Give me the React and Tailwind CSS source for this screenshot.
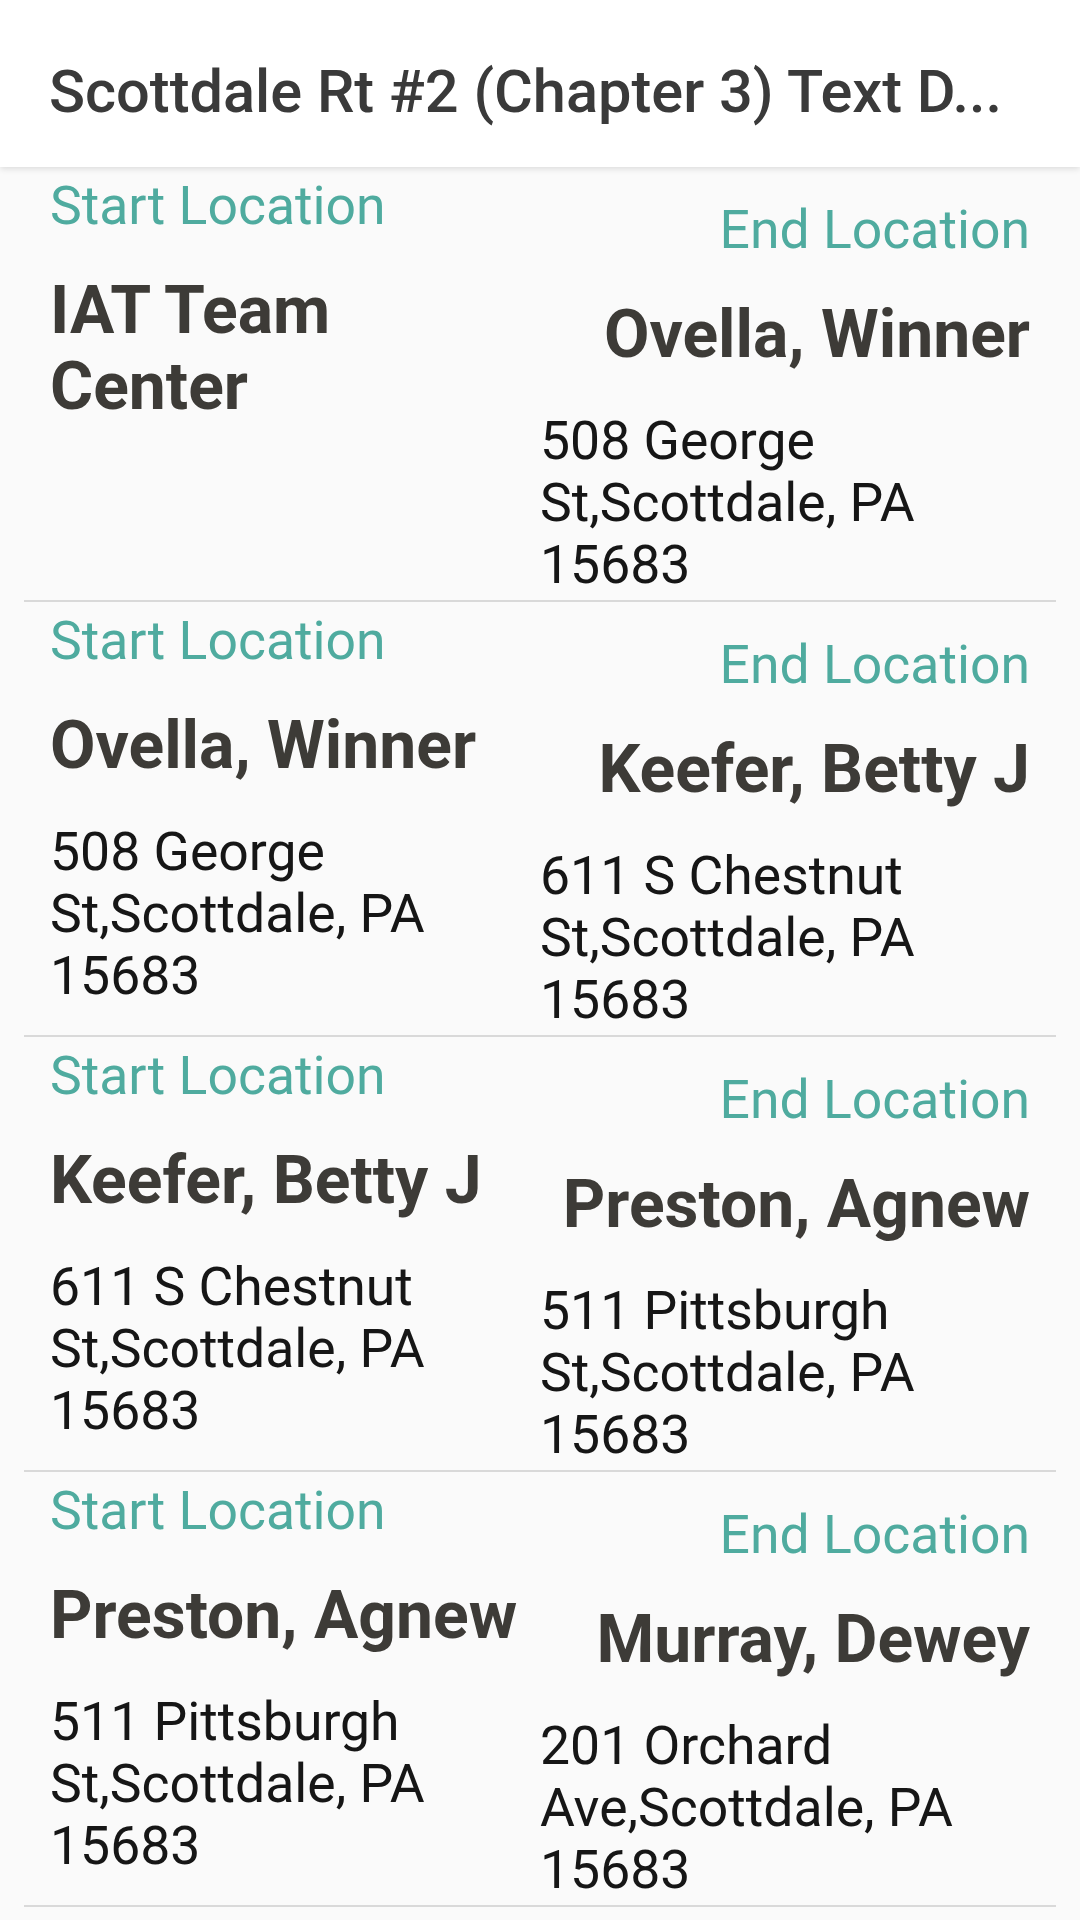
import React from "react";

const rows = [
  {
    start: "IAT Team Center",
    startAddr: null,
    end: "Ovella, Winner",
    endAddr: "508 George St,Scottdale, PA 15683",
  },
  {
    start: "Ovella, Winner",
    startAddr: "508 George St,Scottdale, PA 15683",
    end: "Keefer, Betty J",
    endAddr: "611 S Chestnut St,Scottdale, PA 15683",
  },
  {
    start: "Keefer, Betty J",
    startAddr: "611 S Chestnut St,Scottdale, PA 15683",
    end: "Preston, Agnew",
    endAddr: "511 Pittsburgh St,Scottdale, PA 15683",
  },
  {
    start: "Preston, Agnew",
    startAddr: "511 Pittsburgh St,Scottdale, PA 15683",
    end: "Murray, Dewey",
    endAddr: "201 Orchard Ave,Scottdale, PA 15683",
  },
];

function Column({ label, name, addr, right }) {
  return (
    <div className={"w-1/2 flex flex-col " + (right ? "pt-[24px] items-end" : "items-start pr-[16px]")}>
      <div className="text-[53.5px] leading-[64px] text-[#4fab9f] whitespace-nowrap">{label}</div>
      <div
        className={
          "mt-[35px] text-[66px] leading-[76px] font-bold text-[#3d3b37] " +
          (right ? "text-right" : "text-left")
        }
      >
        {name}
      </div>
      {addr && (
        <div className="self-stretch mt-[37px] text-[53.5px] leading-[62px] text-[#161616] text-left">
          {addr}
        </div>
      )}
    </div>
  );
}

export default function App() {
  return (
    <div
      className="w-[1080px] h-[1920px] overflow-hidden bg-[#fafafa]"
      style={{ fontFamily: "Roboto, 'Noto Sans', sans-serif" }}
    >
      <div className="relative z-10 h-[167px] bg-white flex items-center pl-[49px] pt-[18px] shadow-[0_2px_6px_rgba(0,0,0,0.12)]">
        <div className="text-[59.5px] font-medium text-[#3a3a3a] whitespace-nowrap">
          Scottdale Rt #2 (Chapter 3) Text D...
        </div>
      </div>
      <div className="flex flex-col">
        {rows.map((r, i) => (
          <div key={i} className="mx-[24px] border-b-2 border-[#d9d9d9]">
            <div className="flex px-[26px] pt-[7px] pb-[4px]">
              <Column label="Start Location" name={r.start} addr={r.startAddr} />
              <Column label="End Location" name={r.end} addr={r.endAddr} right />
            </div>
          </div>
        ))}
      </div>
    </div>
  );
}
